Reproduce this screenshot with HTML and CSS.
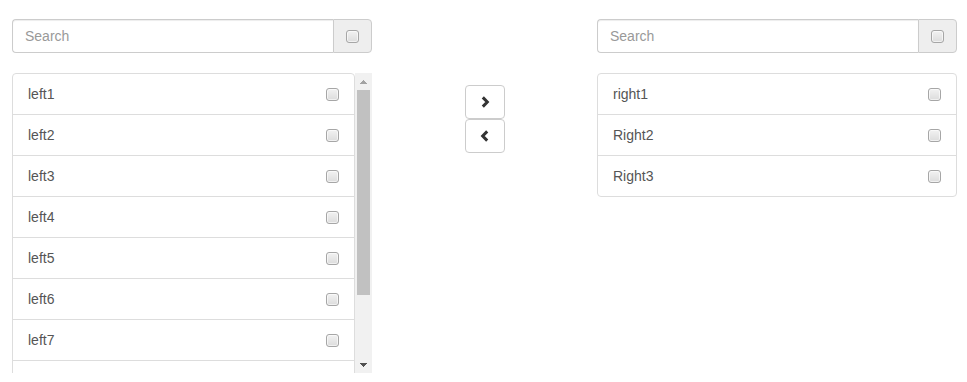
FILE: index.html
```html
<!DOCTYPE html>
<html lang="en">
<head>
    <meta charset="UTF-8">
    <meta name="viewport" content="width=device-width, initial-scale=1.0">
    <link rel="stylesheet" href="styles.css">
</head>
<body>

<div class="dualList">

    <!-- Left side -->
    <div class="side">
        <div class="searchGroup">
            <input type="text" class="searchInput" placeholder="Search">
            <span class="searchAddon"><input type="checkbox" class="box"></span>
        </div>
        <div class="scrollBox">
            <div class="scrollView">
                <ul class="itemList">
                    <li>left1 <input type="checkbox" class="box"></li>
                    <li>left2 <input type="checkbox" class="box"></li>
                    <li>left3 <input type="checkbox" class="box"></li>
                    <li>left4 <input type="checkbox" class="box"></li>
                    <li>left5 <input type="checkbox" class="box"></li>
                    <li>left6 <input type="checkbox" class="box"></li>
                    <li>left7 <input type="checkbox" class="box"></li>
                    <li>left8 <input type="checkbox" class="box"></li>
                    <li>left9 <input type="checkbox" class="box"></li>
                </ul>
            </div>
            <!-- fake scrollbar (headless hides the real one) -->
            <div class="scrollBar">
                <span class="scrollArrow up"></span>
                <div class="scrollTrack"><span class="scrollThumb"></span></div>
                <span class="scrollArrow down"></span>
            </div>
        </div>
    </div>

    <!-- Move buttons -->
    <div class="moveButtons">
        <button type="button" class="moveBtn">
            <svg width="10" height="12" viewBox="0 0 10 12"><path d="M2.8 1.4 L7.3 6 L2.8 10.6" fill="none" stroke="#333" stroke-width="3"/></svg>
        </button>
        <button type="button" class="moveBtn">
            <svg width="10" height="12" viewBox="0 0 10 12"><path d="M7.2 1.4 L2.7 6 L7.2 10.6" fill="none" stroke="#333" stroke-width="3"/></svg>
        </button>
    </div>

    <!-- Right side -->
    <div class="side">
        <div class="searchGroup">
            <input type="text" class="searchInput" placeholder="Search">
            <span class="searchAddon"><input type="checkbox" class="box"></span>
        </div>
        <ul class="itemList">
            <li>right1 <input type="checkbox" class="box"></li>
            <li>Right2 <input type="checkbox" class="box"></li>
            <li>Right3 <input type="checkbox" class="box"></li>
        </ul>
    </div>

</div>

</body>
</html>
```

FILE: styles.css
```css
body {
    margin: 0;
    font-family: "Liberation Sans", Arial, sans-serif;
    font-size: 14px;
    line-height: 20px;
    color: #555;
    background: #fff;
}

.dualList {
    display: grid;
    grid-template-columns: 360px 1fr 360px;
    padding: 19px 10px 0 12px;
}

.searchGroup {
    display: flex;
    height: 34px;
    margin-bottom: 20px;
}

.searchInput {
    flex: 1;
    min-width: 0;
    box-sizing: border-box;
    height: 34px;
    padding: 6px 12px;
    border: 1px solid #ccc;
    border-right: none;
    border-radius: 4px 0 0 4px;
    font-family: inherit;
    font-size: 14px;
    color: #555;
    outline: none;
    box-shadow: inset 0 1px 1px rgba(0, 0, 0, .075);
}

.searchInput::placeholder {
    color: #999;
}

.searchAddon {
    display: flex;
    align-items: center;
    padding: 0 12px;
    background: #eee;
    border: 1px solid #ccc;
    border-radius: 0 4px 4px 0;
}

.box {
    appearance: none;
    -webkit-appearance: none;
    width: 13px;
    height: 13px;
    margin: 0;
    box-sizing: border-box;
    border: 1px solid #a6a6a6;
    border-radius: 3px;
    background: linear-gradient(#f2f2f2, #dcdcdc);
    box-shadow: inset 0 0 0 1px rgba(255, 255, 255, .6);
}

.scrollBox {
    display: flex;
    height: 300px;
}

.scrollView {
    flex: 1;
    overflow: hidden;
}

.scrollBar {
    display: flex;
    flex-direction: column;
    width: 17px;
    background: #f1f1f1;
}

.scrollArrow {
    height: 17px;
    background-repeat: no-repeat;
    background-position: center;
    background-size: 7px 4px;
}

.scrollArrow.up {
    background-image: conic-gradient(from 139deg at 50% 0%, #a3a3a3 0deg 82deg, transparent 82deg);
}

.scrollArrow.down {
    background-image: conic-gradient(from -41deg at 50% 100%, #505050 0deg 82deg, transparent 82deg);
}

.scrollTrack {
    flex: 1;
    padding: 0 2px;
}

.scrollThumb {
    display: block;
    height: 205px;
    background: #c1c1c1;
}

.itemList {
    list-style: none;
    margin: 0 0 20px 0;
    padding: 0;
    border: 1px solid #ddd;
    border-radius: 4px;
    background: #fff;
}

.itemList li {
    display: flex;
    align-items: center;
    justify-content: space-between;
    padding: 10px 15px;
    border-top: 1px solid #ddd;
}

.itemList li:first-child {
    border-top: none;
}

.moveButtons {
    display: flex;
    flex-direction: column;
    align-items: center;
    padding-top: 66px;
}

.moveBtn {
    display: flex;
    align-items: center;
    justify-content: center;
    width: 40px;
    height: 34px;
    padding: 0;
    background: #fff;
    border: 1px solid #ccc;
    border-radius: 4px;
    cursor: pointer;
}
```
